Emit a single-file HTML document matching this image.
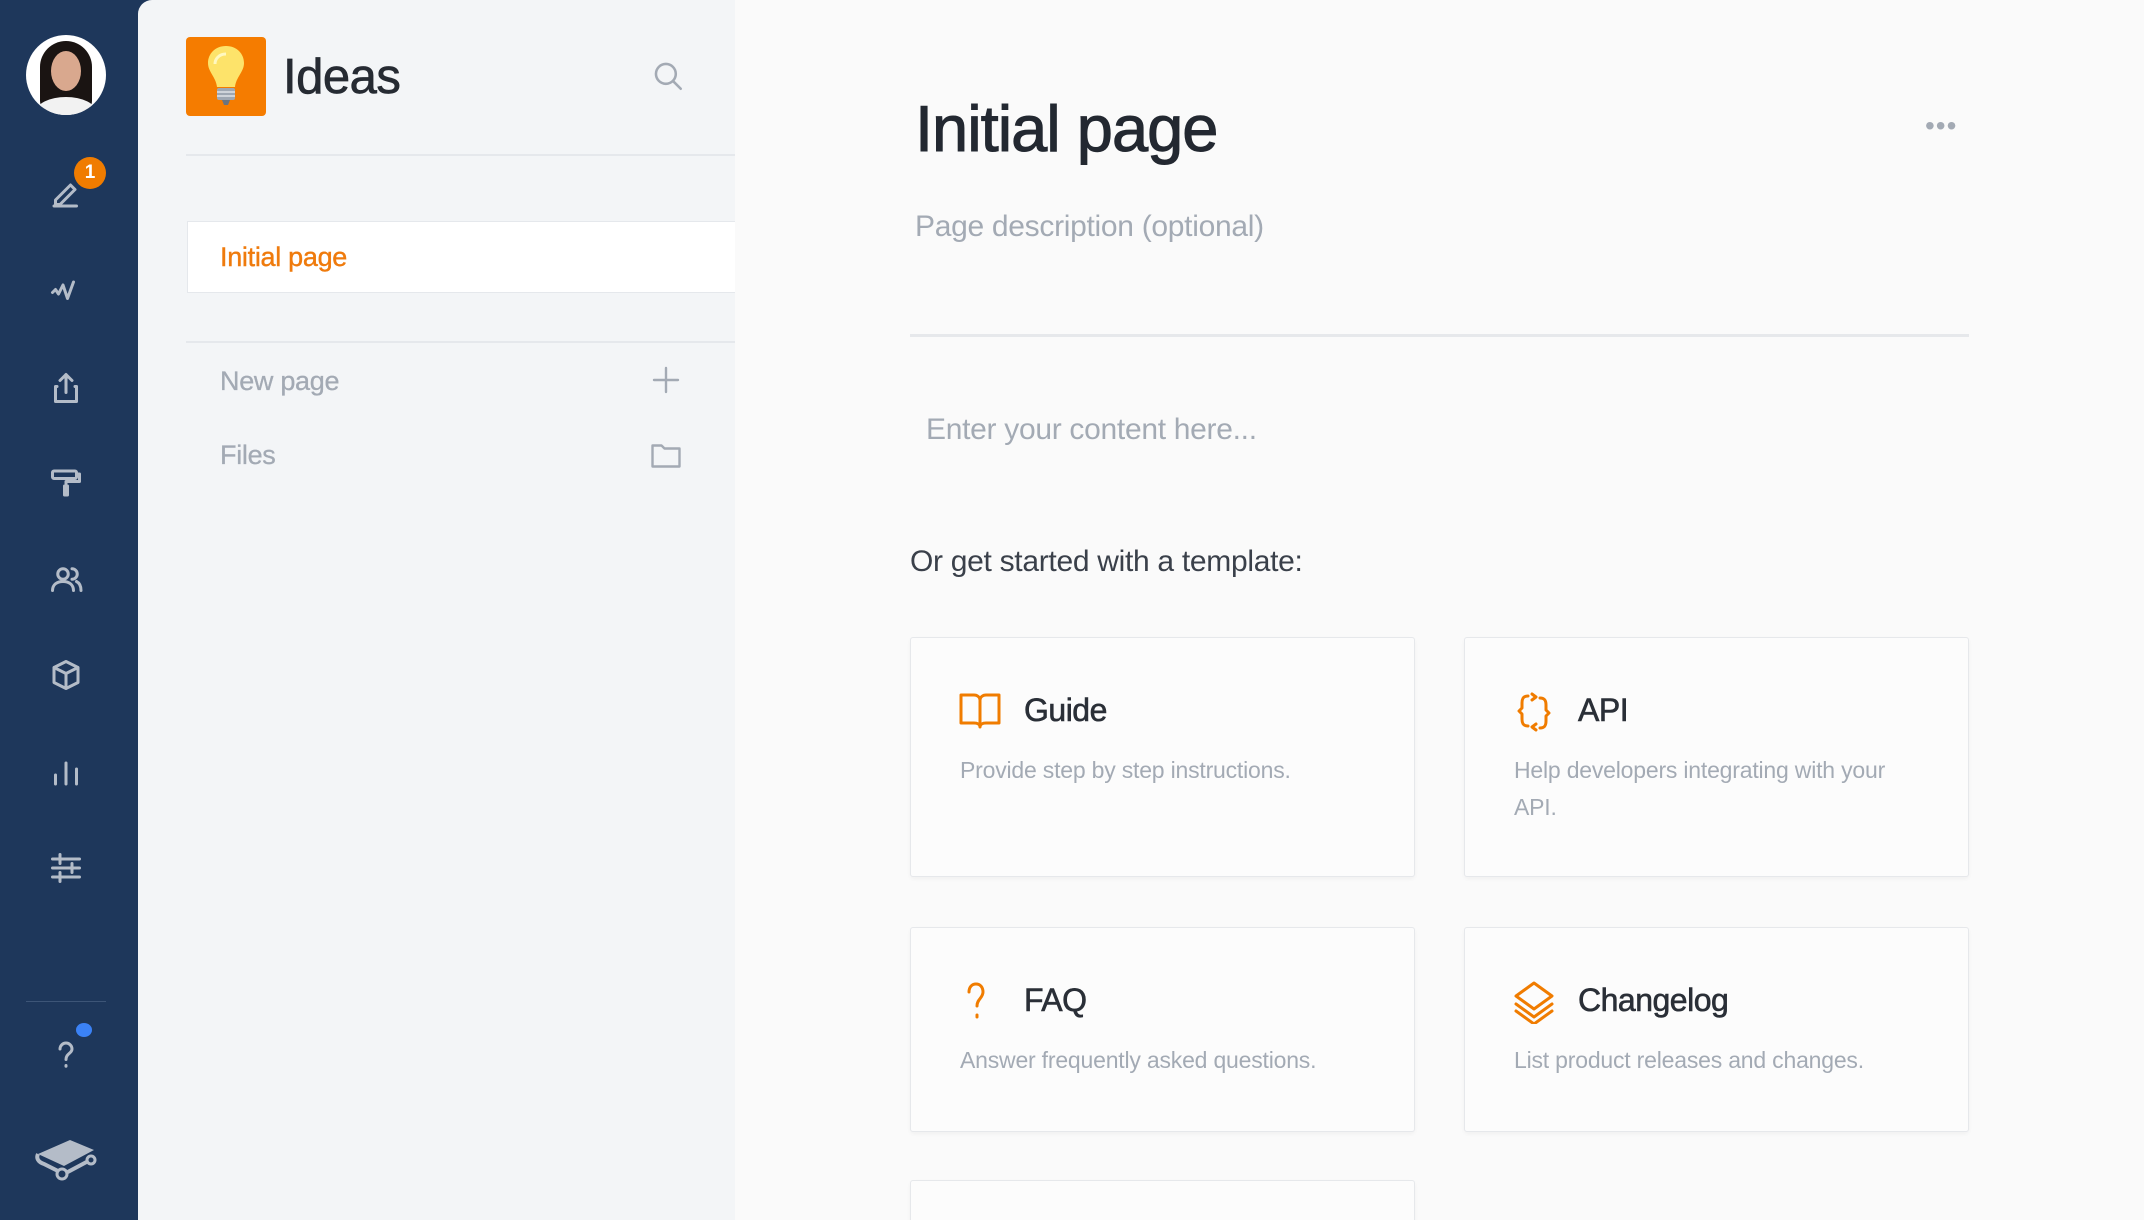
<!DOCTYPE html>
<html style="overflow:hidden;width:2144px;height:1220px"><head><meta charset="utf-8"><style>
*{margin:0;padding:0;box-sizing:border-box}
body{width:2144px;height:1220px;overflow:hidden;background:#1e375b;font-family:"Liberation Sans",Arial,sans-serif;position:relative}
.rail{position:absolute;left:0;top:0;width:140px;height:1220px;background:#1e375b}
.panel{position:absolute;left:138px;top:0;width:598px;height:1220px;background:#f3f5f7;border-top-left-radius:14px}
.main{position:absolute;left:735px;top:0;width:1409px;height:1220px;background:#fafafa;overflow:hidden}
.abs{position:absolute}
.med{-webkit-text-stroke:0.7px currentColor}
.ic{position:absolute;left:48px;width:36px;height:36px}
.ic svg{width:36px;height:36px;fill:none;stroke:#b4bcc8;stroke-width:2;stroke-linecap:round;stroke-linejoin:round}
.card{position:absolute;background:#fcfcfc;border:1px solid #e6e8eb;border-radius:3px;box-shadow:0 2px 4px rgba(0,0,0,0.04)}
.card .t{position:absolute;left:113px;top:54px;font-size:32px;color:#2a2f37;letter-spacing:-0.5px;-webkit-text-stroke:0.6px #2a2f37}
.card .d{position:absolute;left:49px;top:114px;font-size:23px;color:#a3aab4;line-height:37px;letter-spacing:-0.2px;width:400px}
.card svg{position:absolute;left:47px;top:52px;width:44px;height:44px;fill:none;stroke:#f07c00;stroke-width:3;stroke-linejoin:round;stroke-linecap:round}
</style></head><body>
<div class="rail">
  <div class="abs" style="left:26px;top:35px;width:80px;height:80px;border-radius:50%;background:#fff;overflow:hidden">
    <div class="abs" style="left:14px;top:6px;width:52px;height:70px;border-radius:26px 26px 10px 10px;background:#1a1412"></div>
    <div class="abs" style="left:25px;top:16px;width:30px;height:40px;border-radius:50%;background:#d9a88e"></div>
    <div class="abs" style="left:10px;top:62px;width:60px;height:30px;border-radius:50%;background:#f2f2f2"></div>
  </div>
  <div class="ic" style="top:176px"><svg viewBox="0 0 24 24"><path d="M4 20h15M5 16l10-10 3 3-10 10H5z"/></svg></div>
  <div class="abs" style="left:74px;top:157px;width:32px;height:32px;border-radius:50%;background:#f07c00;color:#fff;font-size:19px;font-weight:bold;text-align:center;line-height:32px">1</div>
  <div class="ic" style="top:273px"><svg viewBox="0 0 24 24"><path d="M3 13l2-2 2 3 3-6 3 9 4-11"/></svg></div>
  <div class="ic" style="top:370px"><svg viewBox="0 0 24 24"><path d="M12 15V3M8 7l4-4 4 4M6 11H5v10h14V11h-1"/></svg></div>
  <div class="ic" style="top:465px"><svg viewBox="0 0 24 24"><rect x="3" y="4" width="16" height="5" rx="1"/><path d="M19 6h2v5h-9v3M11 14h2v6h-2z"/></svg></div>
  <div class="ic" style="top:562px"><svg viewBox="0 0 24 24"><circle cx="10" cy="8" r="3.5"/><path d="M3 19c0-4 3-6 7-6s7 2 7 6M16 4.5a3.5 3.5 0 010 7M19 13c2 1 3 3 3 6"/></svg></div>
  <div class="ic" style="top:657px"><svg viewBox="0 0 24 24"><path d="M12 3l8 4v10l-8 4-8-4V7zM4 7l8 4 8-4M12 11v10"/></svg></div>
  <div class="ic" style="top:754px"><svg viewBox="0 0 24 24"><path d="M5 14v6M12 6v14M19 10v10"/></svg></div>
  <div class="ic" style="top:850px"><svg viewBox="0 0 24 24"><path d="M3 6h18M3 12h18M3 18h18M8 3v6M16 9v6M8 15v6"/></svg></div>
  <div class="abs" style="left:26px;top:1001px;width:80px;height:1px;background:#3d5577"></div>
  <div class="ic" style="top:1037px"><svg viewBox="0 0 24 24"><path d="M8 8a4 4 0 118 0c0 3-4 3-4 7M12 19v.5"/></svg></div>
  <div class="abs" style="left:76px;top:1023px;width:16px;height:14px;border-radius:50%;background:#3b82f6"></div>
  <svg class="abs" style="left:34px;top:1134px" width="64" height="50" viewBox="0 0 64 50"><path d="M4 20L36 6l24 10-30 16z" fill="#b4bcc8"/><path d="M4 20c-2 4 0 8 6 10l20 10 30-16" fill="none" stroke="#b4bcc8" stroke-width="4"/><circle cx="28" cy="40" r="5" fill="#1e375b" stroke="#b4bcc8" stroke-width="3"/><circle cx="57" cy="26" r="4" fill="#1e375b" stroke="#b4bcc8" stroke-width="3"/></svg>
</div>
<div class="panel">
  <div class="abs" style="left:48px;top:37px;width:80px;height:79px;background:#f57c00;border-radius:4px"></div>
  <svg class="abs" style="left:58px;top:42px" width="60" height="70" viewBox="0 0 60 70"><path d="M30 4c-11 0-18 8-18 17 0 9 8 14 9 24h18c1-10 9-15 9-24 0-9-7-17-18-17z" fill="#fde36a"/><path d="M30 12c-7 0-11 5-11 10" stroke="#fff8c0" stroke-width="3" fill="none"/><rect x="21" y="46" width="18" height="12" rx="2" fill="#9ea7b3"/><path d="M21 50h18M21 54h18" stroke="#dde2e8" stroke-width="1.5"/><path d="M26 58h8l-2 5h-4z" fill="#6b7480"/></svg>
  <div class="abs med" style="left:145px;top:49px;font-size:49px;color:#262b33;letter-spacing:-0.5px">Ideas</div>
  <svg class="abs" style="left:513px;top:59px" width="34" height="34" viewBox="0 0 24 24" fill="none" stroke="#a3aab4" stroke-width="1.8" stroke-linecap="round"><circle cx="10.5" cy="10.5" r="7"/><path d="M16 16l5 5"/></svg>
  <div class="abs" style="left:48px;top:154px;width:550px;height:2px;background:#e5e8ec"></div>
  <div class="abs" style="left:49px;top:221px;width:549px;height:72px;background:#fff;border:1px solid #e5e8ec;border-right:none"></div>
  <div class="abs med" style="left:82px;top:242px;font-size:27px;color:#ef7b0d;letter-spacing:-0.3px;-webkit-text-stroke:0.4px #ef7b0d">Initial page</div>
  <div class="abs" style="left:48px;top:341px;width:550px;height:2px;background:#e5e8ec"></div>
  <div class="abs" style="left:82px;top:366px;font-size:27px;color:#a3aab4;letter-spacing:-0.3px;-webkit-text-stroke:0.3px #a3aab4">New page</div>
  <svg class="abs" style="left:512px;top:364px" width="32" height="32" viewBox="0 0 24 24" fill="none" stroke="#a3aab4" stroke-width="1.8" stroke-linecap="round"><path d="M12 3v18M3 12h18"/></svg>
  <div class="abs" style="left:82px;top:440px;font-size:27px;color:#a3aab4;letter-spacing:-0.3px;-webkit-text-stroke:0.3px #a3aab4">Files</div>
  <svg class="abs" style="left:510px;top:438px" width="36" height="36" viewBox="0 0 24 24" fill="none" stroke="#a3aab4" stroke-width="1.6" stroke-linejoin="round"><path d="M3 5h6l2 2h10v12H3z"/></svg>
</div>
<div class="main">
  <div class="abs med" style="left:180px;top:91px;font-size:65px;color:#232831;letter-spacing:-1px;-webkit-text-stroke:1px #232831">Initial page</div>
  <div class="abs" style="left:1190px;top:110px;font-size:28px;color:#a3aab4;letter-spacing:1px">•••</div>
  <div class="abs" style="left:180px;top:210px;font-size:30px;color:#a3aab4;letter-spacing:-0.3px">Page description (optional)</div>
  <div class="abs" style="left:175px;top:334px;width:1059px;height:3px;background:#e6e8eb"></div>
  <div class="abs" style="left:191px;top:413px;font-size:30px;color:#a3aab4;letter-spacing:-0.3px">Enter your content here...</div>
  <div class="abs" style="left:175px;top:545px;font-size:30px;color:#3a404a;letter-spacing:-0.3px">Or get started with a template:</div>

  <div class="card" style="left:175px;top:637px;width:505px;height:240px">
    <svg viewBox="0 0 44 44"><path d="M3 5h13c3 0 6 2 6 5v27c0-3-3-4-6-4H3zM41 5H28c-3 0-6 2-6 5v27c0-3 3-4 6-4h13z"/></svg>
    <div class="t">Guide</div><div class="d">Provide step by step instructions.</div>
  </div>
  <div class="card" style="left:729px;top:637px;width:505px;height:240px">
    <svg viewBox="0 0 44 44"><path d="M16 6c-5 0-6 3-6 7v5l-3 3 3 3v5c0 4 1 7 6 7M28 38c5 0 6-3 6-7v-5l3-3-3-3v-5c0-4-1-7-6-7M20 4l4 3-4 3M24 34l-4 3 4 3"/></svg>
    <div class="t">API</div><div class="d">Help developers integrating with your API.</div>
  </div>
  <div class="card" style="left:175px;top:927px;width:505px;height:205px">
    <svg viewBox="0 0 44 44"><path d="M11 12c0-5 3-8 7-8s7 3 7 8c0 6-6 7-6 14M19 35v2"/></svg>
    <div class="t">FAQ</div><div class="d">Answer frequently asked questions.</div>
  </div>
  <div class="card" style="left:729px;top:927px;width:505px;height:205px">
    <svg viewBox="0 0 44 44"><path d="M22 3l18 13-18 13L4 16zM4 24l18 13 18-13M4 31l18 13 18-13"/></svg>
    <div class="t">Changelog</div><div class="d">List product releases and changes.</div>
  </div>
  <div class="card" style="left:175px;top:1180px;width:505px;height:60px"></div>
</div>
</body></html>
